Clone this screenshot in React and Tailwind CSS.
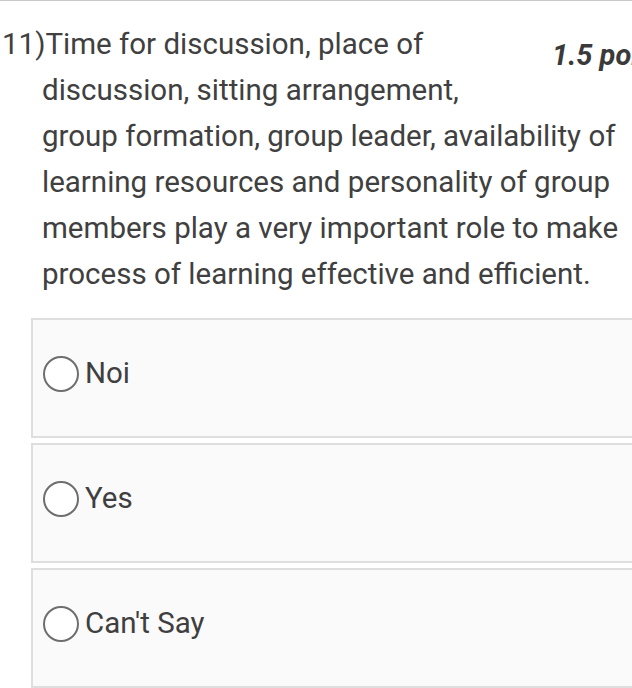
export default function App() {
  const options = ['Noi', 'Yes', "Can't Say"];

  return (
    <div className="w-[632px] h-[688px] overflow-hidden bg-white border-t border-[#c8c8c8]" style={{ fontFamily: 'Roboto, "Noto Sans", sans-serif' }}>
      <div className="pt-[20px] text-[#404040]">
        <div className="float-right w-[104px] h-[86px] pt-[18px] pl-[24px] text-[29px] font-bold italic leading-[32px] whitespace-nowrap text-[#3a3a3a]">
          1.5 points
        </div>
        <p className="pl-[42px] -indent-[40px] text-[29.5px] leading-[46px]">
          11)Time for discussion, place of discussion, sitting arrangement, group formation, group leader, availability of learning resources and personality of group members play a very important role to make process of learning effective and efficient.
        </p>
      </div>

      <div className="clear-both pt-[21px] pl-[31px] flex flex-col gap-[5px]">
        {options.map((opt) => (
          <label
            key={opt}
            className="w-[640px] h-[120px] flex items-center pl-[10px] pb-[9px] bg-[#fafafa] border-2 border-[#dedede]"
          >
            <span className="w-[36px] h-[36px] rounded-full border-2 border-[#6e6e6e] bg-white shrink-0" />
            <span className="ml-[6px] text-[29.5px] text-[#3f3f3f] leading-none">{opt}</span>
          </label>
        ))}
      </div>
    </div>
  );
}
